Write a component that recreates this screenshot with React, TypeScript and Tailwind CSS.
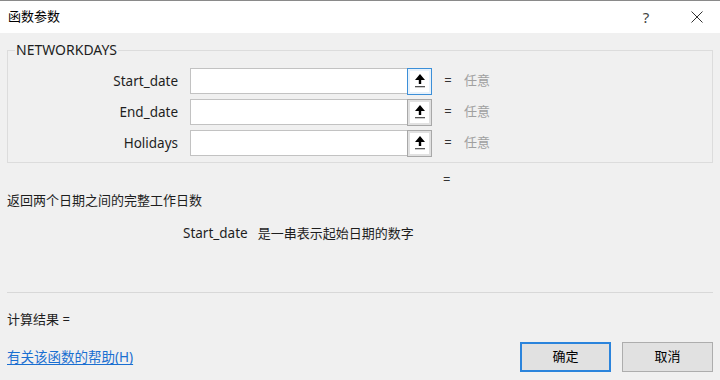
import { FC } from "react";

const font = "font-['Segoe_UI','Noto_Sans','Noto_Sans_CJK_SC',sans-serif]";

const PickIcon: FC = () => (
  <svg width="12" height="16" viewBox="0 0 12 16">
    <path d="M6 1 L11 7 L7.2 7 L7.2 11 L4.8 11 L4.8 7 L1 7 Z" fill="#000" />
    <rect x="1" y="13" width="10" height="1.3" fill="#555" />
  </svg>
);

interface ArgRowProps {
  label: string;
  active?: boolean;
}

const ArgRow: FC<ArgRowProps> = ({ label, active }) => (
  <div className="flex items-center h-[26px]">
    <div className="w-[182px] text-right pr-[12px] text-[13.5px] text-[#1e1e1e]">{label}</div>
    <div className="w-[217px] h-[26px] bg-white border border-[#c2c2c2] border-r-0" />
    <div
      className={
        active
          ? "w-[25px] h-[27px] border border-[#3c8fd8] bg-[#e8f2fb] p-[2px] flex"
          : "w-[25px] h-[27px] border border-[#a8a8a8] bg-[#e1e1e1] p-[2px] flex"
      }
    >
      <div className="flex-1 bg-white flex items-center justify-center">
        <PickIcon />
      </div>
    </div>
    <div className="w-[32px] text-center text-[13px] text-[#333]">=</div>
    <div className="text-[13px] text-[#a0a0a0]">任意</div>
  </div>
);

export default function App() {
  return (
    <div className={`w-[720px] h-[380px] bg-[#f0f0f0] flex flex-col ${font} overflow-hidden`}>
      <div className="h-[33px] bg-white border-t border-[#8a8a8a] flex items-center pl-[8px]">
        <div className="flex-1 text-[13px] text-black">函数参数</div>
        <div className="w-[24px] text-center text-[15px] text-[#444] mr-[33px]">?</div>
        <svg width="12" height="12" viewBox="0 0 12 12" className="mr-[17px]">
          <path d="M0.5 0.5 L11.5 11.5 M11.5 0.5 L0.5 11.5" stroke="#333" strokeWidth="1" />
        </svg>
      </div>

      <div className="px-[7px] pt-[17px]">
        <div className="relative border border-[#dcdcdc] h-[113px] pt-[17px] flex flex-col gap-[5px]">
          <div className="absolute left-[7px] top-[-10px] px-[1px] bg-[#f0f0f0] text-[14px] text-[#1e1e1e] leading-[18px]">
            NETWORKDAYS
          </div>
          <ArgRow label="Start_date" active />
          <ArgRow label="End_date" />
          <ArgRow label="Holidays" />
        </div>

        <div className="h-[20px] pl-[436px] text-[13px] text-[#333] leading-[20px] mt-[6px]">=</div>
        <div className="text-[13px] text-[#1e1e1e] leading-[20px] mt-[1px]">返回两个日期之间的完整工作日数</div>
        <div className="flex text-[13px] text-[#1e1e1e] leading-[20px] mt-[13px] pl-[176px]">
          <span className="mr-[10px] text-[13.5px]">Start_date</span>
          <span>是一串表示起始日期的数字</span>
        </div>

        <div className="border-t border-[#d8d8d8] mt-[49px]" />
        <div className="text-[13px] text-[#1e1e1e] leading-[20px] mt-[16px]">计算结果 =</div>

        <div className="flex items-center mt-[13px]">
          <a className="flex-1 text-[13.5px] text-[#1a6fd1] underline underline-offset-2 cursor-pointer">
            有关该函数的帮助(H)
          </a>
          <button className="w-[91px] h-[30px] border-2 border-[#2b84dc] bg-[#e1e1e1] text-[13px] text-black mr-[11px]">
            确定
          </button>
          <button className="w-[91px] h-[30px] border border-[#adadad] bg-[#e1e1e1] text-[13px] text-black">
            取消
          </button>
        </div>
      </div>
    </div>
  );
}
